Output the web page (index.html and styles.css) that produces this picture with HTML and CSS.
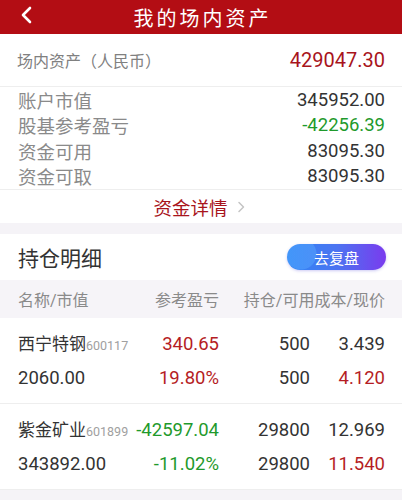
FILE: index.html
```html
<!DOCTYPE html>
<html lang="zh-CN">
<head>
    <meta charset="UTF-8">
    <meta name="viewport" content="width=device-width, initial-scale=1.0">
    <title>我的场内资产</title>
    <link rel="stylesheet" href="styles.css">
</head>
<body>
    <div class="topbar">
        <svg class="back" width="14" height="18" viewBox="0 0 14 18">
            <path d="M11 2 L4 9 L11 16" fill="none" stroke="#fff" stroke-width="2.6" stroke-linecap="round" stroke-linejoin="round"/>
        </svg>
        <h1>我的场内资产</h1>
    </div>

    <div class="card">
        <div class="total">
            <span class="total-label">场内资产（人民币）</span>
            <span class="total-value">429047.30</span>
        </div>
        <div class="summary">
            <div class="line"><span class="label">账户市值</span><span>345952.00</span></div>
            <div class="line"><span class="label">股基参考盈亏</span><span class="down">-42256.39</span></div>
            <div class="line"><span class="label">资金可用</span><span>83095.30</span></div>
            <div class="line"><span class="label">资金可取</span><span>83095.30</span></div>
        </div>
        <div class="detail-link">
            <span>资金详情</span>
            <svg width="8" height="12" viewBox="0 0 8 12">
                <path d="M2 1.5 L6.5 6 L2 10.5" fill="none" stroke="#c4c4c4" stroke-width="1.5" stroke-linecap="round" stroke-linejoin="round"/>
            </svg>
        </div>
    </div>

    <div class="card holdings">
        <div class="holdings-title">
            <h2>持仓明细</h2>
            <button class="review">去复盘</button>
        </div>
        <div class="grid head">
            <span>名称/市值</span>
            <span class="r">参考盈亏</span>
            <span class="r wide">持仓/可用成本/现价</span>
        </div>
        <div class="grid stock">
            <span class="name">西宁特钢<small>600117</small></span>
            <span class="r up">340.65</span>
            <span class="r">500</span>
            <span class="r">3.439</span>
            <span>2060.00</span>
            <span class="r up">19.80%</span>
            <span class="r">500</span>
            <span class="r up">4.120</span>
        </div>
        <div class="grid stock">
            <span class="name">紫金矿业<small>601899</small></span>
            <span class="r down">-42597.04</span>
            <span class="r">29800</span>
            <span class="r">12.969</span>
            <span>343892.00</span>
            <span class="r down">-11.02%</span>
            <span class="r">29800</span>
            <span class="r up">11.540</span>
        </div>
    </div>
</body>
</html>
```

FILE: styles.css
```css
body {
    margin: 0;
    background-color: #f5f3f7;
    font-family: Roboto, "Noto Sans CJK SC", sans-serif;
    color: #333;
    overflow-x: hidden;
}

.topbar {
    height: 34px;
    background-color: #b30d14;
    display: flex;
    align-items: center;
    justify-content: center;
    position: relative;
}
.topbar h1 {
    margin: 0;
    color: #fff;
    font-size: 20px;
    font-weight: normal;
    letter-spacing: 3px;
    margin-right: -3px;
}
.back {
    position: absolute;
    left: 19px;
    top: 6px;
}

.card {
    background-color: #fff;
}

.total {
    height: 52px;
    padding: 0 17px 0 17px;
    display: flex;
    align-items: center;
    justify-content: space-between;
    border-bottom: 1px solid #eeeeee;
}
.total-label {
    font-size: 16px;
    color: #808080;
}
.total-value {
    font-size: 20px;
    color: #a8141c;
}

.summary {
    padding: 0 17px 0 18px;
    border-bottom: 1px solid #eeeeee;
}
.line {
    height: 25.5px;
    display: flex;
    align-items: center;
    justify-content: space-between;
    font-size: 18.5px;
}
.label {
    color: #8a8a8a;
}

.detail-link {
    height: 33px;
    display: flex;
    align-items: center;
    justify-content: center;
    gap: 9px;
    font-size: 18.5px;
    color: #a8141c;
    padding-right: 4px;
}

.holdings {
    margin-top: 11px;
}
.holdings-title {
    height: 46px;
    display: flex;
    align-items: center;
    justify-content: space-between;
    padding: 0 16px 0 18px;
}
.holdings-title h2 {
    margin: 0;
    font-size: 21px;
    font-weight: normal;
    color: #333;
}
.review {
    width: 99px;
    height: 26px;
    border: none;
    border-radius: 13px;
    color: #fff;
    font-family: inherit;
    font-size: 15px;
    background:
        radial-gradient(circle at 14px 10px, rgba(90, 170, 255, 0.45) 0, rgba(90, 170, 255, 0.45) 15px, transparent 16px),
        linear-gradient(90deg, #2f86f5, #4b74f1 50%, #7a3bee);
    box-shadow: 0 1px 3px rgba(90, 80, 220, 0.3);
}

.grid {
    display: grid;
    grid-template-columns: 1fr 90px 91px 75px;
    padding: 0 17px 0 18px;
}
.r {
    text-align: right;
}
.head {
    height: 38px;
    align-items: center;
    background-color: #f6f4f8;
    font-size: 16px;
    color: #8a8a8a;
}
.head .wide {
    grid-column: span 2;
    white-space: nowrap;
}
.stock {
    padding-top: 10px;
    padding-bottom: 8px;
    font-size: 18.5px;
    line-height: 33px;
    border-bottom: 1px solid #eeeeee;
    color: #333;
}
.name {
    font-size: 17px;
    white-space: nowrap;
}
.name small {
    font-size: 12.5px;
    color: #a0a0a0;
}
.up {
    color: #b51d24;
}
.down {
    color: #1f9a2c;
}
```
